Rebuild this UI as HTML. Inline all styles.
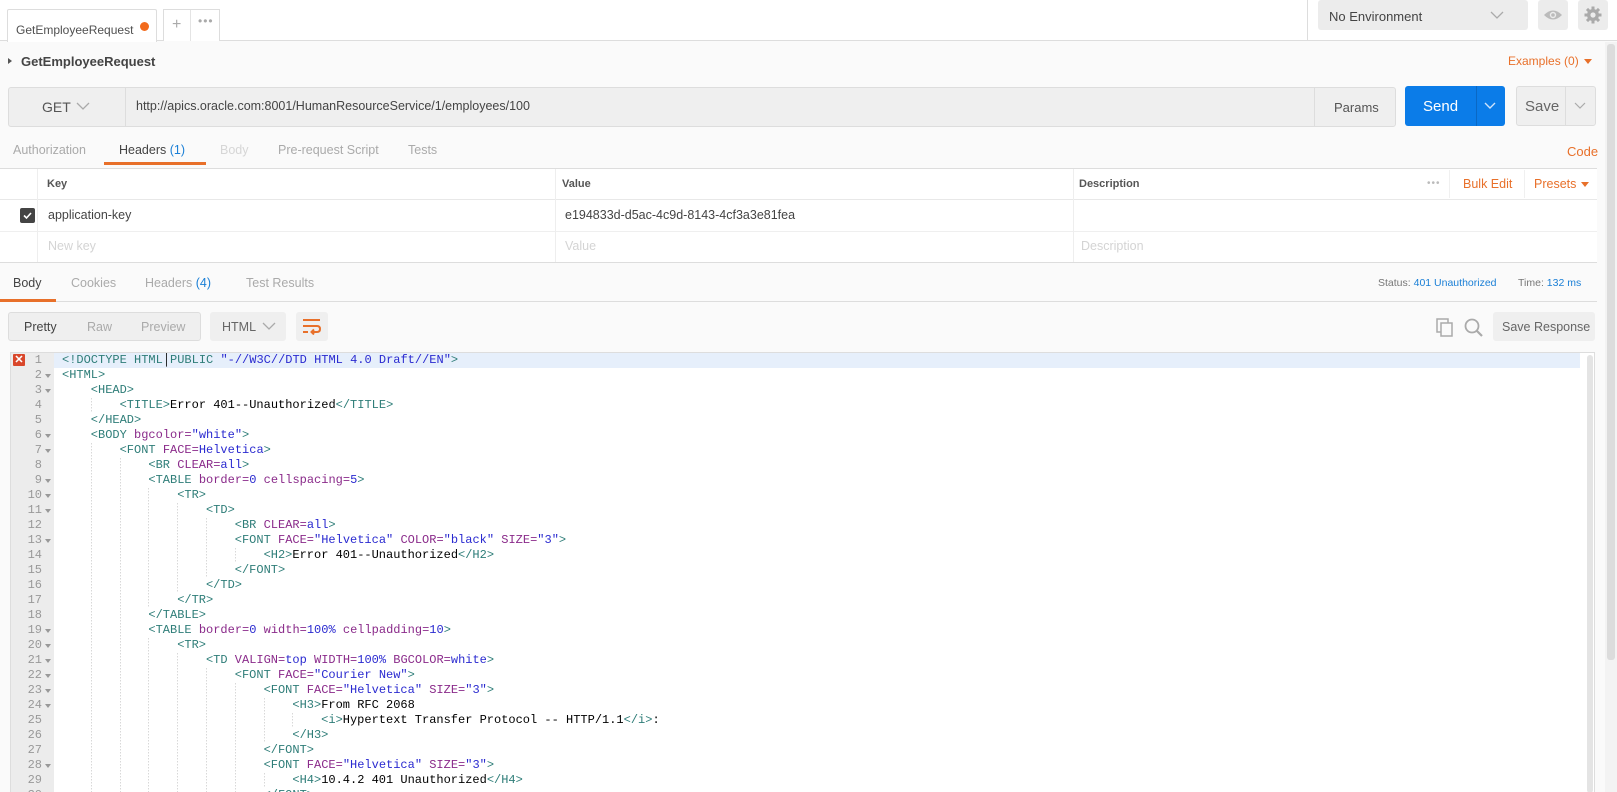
<!DOCTYPE html>
<html><head><meta charset="utf-8"><style>
*{box-sizing:border-box;margin:0;padding:0}
body{width:1617px;height:792px;overflow:hidden;background:#fafafa;font-family:"Liberation Sans",sans-serif;font-size:12px;color:#505050;position:relative}
.a{position:absolute}
.o{color:#e8702a}
.b{color:#1a7fd6}
.code{position:absolute;left:10px;top:352px;width:1585px;height:440px;background:#fff;border:1px solid #ddd;border-bottom:none;overflow:hidden}
.gut{position:absolute;left:0;top:0;width:43px;height:100%;background:#ececec}
.ln{position:absolute;left:0;width:43px;height:15px;font:12px/15px "Liberation Mono",monospace;color:#999;text-align:right;padding-right:12px}
.ln.f::after{content:"";position:absolute;right:3px;top:6px;border:3px solid transparent;border-top:4px solid #999;border-bottom:0}
.cl{position:absolute;left:51px;height:15px;font:12px/15px "Liberation Mono",monospace;white-space:pre;color:#000}
.g{display:inline-block;width:28.8px;height:15px;vertical-align:top}
.g.d{background:linear-gradient(#d8d8d8 50%,transparent 50%) 0 0/1px 3px repeat-y}
.t{color:#2e7d78}.at{color:#8a2a8a}.v{color:#2a2ad0}
</style></head><body>
<!-- top tab bar -->
<div class="a" style="left:0;top:0;width:1617px;height:41px;background:#fff;border-bottom:1px solid #ddd"></div>
<div class="a" style="left:7px;top:9px;width:150px;height:33px;background:#fff;border:1px solid #ddd;border-bottom:none;border-radius:2px 2px 0 0;font-size:12px;color:#505050;padding:14px 0 0 8px;line-height:1">GetEmployeeRequest</div>
<div class="a" style="left:140px;top:22px;width:9px;height:9px;border-radius:50%;background:#f26b1d"></div>
<div class="a" style="left:163px;top:9px;width:57px;height:32px;border:1px solid #ddd;border-bottom:none;background:#fff"></div>
<div class="a" style="left:190px;top:10px;width:1px;height:31px;background:#e4e4e4"></div>
<div class="a" style="left:172px;top:16px;color:#aaa;font-size:16px">+</div>
<div class="a" style="left:198px;top:14px;color:#aaa;font-size:12px;letter-spacing:1px">•••</div>
<div class="a" style="left:1307px;top:0;width:1px;height:41px;background:#ddd"></div>
<div class="a" style="left:1318px;top:0;width:210px;height:30px;background:#ececec;border-radius:3px;padding:9px 11px;font-size:13px;color:#444">No Environment</div>
<svg class="a" style="left:1490px;top:10px" width="14" height="10"><path d="M1 2 L7 8 L13 2" fill="none" stroke="#aaa" stroke-width="1.3"/></svg>
<div class="a" style="left:1538px;top:0;width:30px;height:30px;background:#ececec;border-radius:3px"></div>
<svg class="a" style="left:1543px;top:8px" width="20" height="14"><path d="M1 7 Q10 -2 19 7 Q10 16 1 7Z" fill="#bbb"/><circle cx="10" cy="7" r="3.2" fill="#ececec"/><circle cx="10" cy="7" r="1.8" fill="#bbb"/></svg>
<div class="a" style="left:1578px;top:0;width:30px;height:30px;background:#ececec;border-radius:3px"></div>
<svg class="a" style="left:1584px;top:6px" width="18" height="18" viewBox="0 0 18 18"><g fill="#aaa"><circle cx="9" cy="9" r="6"/><rect x="7.5" y="0.5" width="3" height="17"/><rect x="0.5" y="7.5" width="17" height="3"/><rect x="7.5" y="0.5" width="3" height="17" transform="rotate(45 9 9)"/><rect x="7.5" y="0.5" width="3" height="17" transform="rotate(-45 9 9)"/></g><circle cx="9" cy="9" r="2.6" fill="#ececec"/></svg>
<!-- outer scrollbar -->
<div class="a" style="left:1605px;top:42px;width:12px;height:750px;background:#f3f3f3"></div>
<div class="a" style="left:1607px;top:44px;width:8px;height:616px;background:#dcdcdc;border-radius:3px"></div>
<!-- request name -->
<div class="a" style="left:8px;top:58px;border:3px solid transparent;border-left:4px solid #555"></div>
<div class="a" style="left:21px;top:54px;font-size:13px;font-weight:bold;color:#444">GetEmployeeRequest</div>
<div class="a o" style="left:1508px;top:54px;font-size:12px">Examples (0)</div>
<div class="a" style="left:1584px;top:59px;border:4px solid transparent;border-top:5px solid #e8702a;border-bottom:0"></div>
<!-- url row -->
<div class="a" style="left:8px;top:87px;width:1388px;height:40px;background:#efefef;border:1px solid #ddd;border-radius:3px"></div>
<div class="a" style="left:125px;top:87px;width:1px;height:40px;background:#ddd"></div>
<div class="a" style="left:1314px;top:87px;width:1px;height:40px;background:#ddd"></div>
<div class="a" style="left:42px;top:99px;font-size:14px;color:#555">GET</div>
<svg class="a" style="left:76px;top:101px" width="14" height="10"><path d="M1 2 L7 8 L13 2" fill="none" stroke="#aaa" stroke-width="1.3"/></svg>
<div class="a" style="left:136px;top:99px;font-size:12.5px;color:#444">http://apics.oracle.com:8001/HumanResourceService/1/employees/100</div>
<div class="a" style="left:1334px;top:100px;font-size:13px;color:#555">Params</div>
<div class="a" style="left:1405px;top:86px;width:100px;height:40px;background:#0b7ce8;border-radius:3px"></div>
<div class="a" style="left:1476px;top:86px;width:1px;height:40px;background:#0a68c4"></div>
<div class="a" style="left:1423px;top:98px;font-size:15px;color:#fff">Send</div>
<svg class="a" style="left:1484px;top:102px" width="12" height="8"><path d="M1 1 L6 6 L11 1" fill="none" stroke="#cfe3fb" stroke-width="1.4"/></svg>
<div class="a" style="left:1516px;top:86px;width:80px;height:40px;background:#efefef;border:1px solid #ddd;border-radius:3px"></div>
<div class="a" style="left:1565px;top:87px;width:1px;height:38px;background:#ddd"></div>
<div class="a" style="left:1525px;top:98px;font-size:15px;color:#666">Save</div>
<svg class="a" style="left:1574px;top:102px" width="12" height="8"><path d="M1 1 L6 6 L11 1" fill="none" stroke="#aaa" stroke-width="1.2"/></svg>
<!-- request tabs -->
<div class="a" style="left:13px;top:143px;font-size:12.5px;color:#aaa">Authorization</div>
<div class="a" style="left:119px;top:143px;font-size:12.5px;color:#444">Headers <span class="b">(1)</span></div>
<div class="a" style="left:104px;top:162px;width:102px;height:3px;background:#e8702a"></div>
<div class="a" style="left:220px;top:143px;font-size:12.5px;color:#d6d6d6">Body</div>
<div class="a" style="left:278px;top:143px;font-size:12.5px;color:#aaa">Pre-request Script</div>
<div class="a" style="left:408px;top:143px;font-size:12.5px;color:#aaa">Tests</div>
<div class="a o" style="left:1567px;top:144px;font-size:13px">Code</div>
<!-- headers table -->
<div class="a" style="left:0;top:168px;width:1597px;height:95px;background:#fff;border-top:1px solid #ddd;border-bottom:1px solid #ddd"></div>
<div class="a" style="left:0;top:199px;width:1597px;height:1px;background:#e8e8e8"></div>
<div class="a" style="left:0;top:231px;width:1597px;height:1px;background:#efefef"></div>
<div class="a" style="left:37px;top:169px;width:1px;height:93px;background:#eee"></div>
<div class="a" style="left:555px;top:169px;width:1px;height:93px;background:#eee"></div>
<div class="a" style="left:1073px;top:169px;width:1px;height:93px;background:#eee"></div>
<div class="a" style="left:47px;top:178px;font-size:11px;font-weight:bold;color:#555">Key</div>
<div class="a" style="left:562px;top:178px;font-size:11px;font-weight:bold;color:#555">Value</div>
<div class="a" style="left:1079px;top:178px;font-size:11px;font-weight:bold;color:#555">Description</div>
<div class="a" style="left:1427px;top:178px;font-size:10px;color:#bbb;letter-spacing:1px">•••</div>
<div class="a" style="left:1449px;top:170px;width:1px;height:28px;background:#f0f0f0"></div>
<div class="a o" style="left:1463px;top:177px;font-size:12.5px">Bulk Edit</div>
<div class="a" style="left:1524px;top:170px;width:1px;height:28px;background:#f0f0f0"></div>
<div class="a o" style="left:1534px;top:177px;font-size:12.5px">Presets</div>
<div class="a" style="left:1581px;top:182px;border:4px solid transparent;border-top:5px solid #e8702a;border-bottom:0"></div>
<div class="a" style="left:20px;top:208px;width:15px;height:15px;background:#444;border-radius:2px"></div>
<svg class="a" style="left:20px;top:208px" width="15" height="15"><path d="M4 7.5 L6.5 10 L11 5" fill="none" stroke="#fff" stroke-width="1.6"/></svg>
<div class="a" style="left:48px;top:208px;font-size:12.5px;color:#444">application-key</div>
<div class="a" style="left:565px;top:208px;font-size:12.5px;color:#444">e194833d-d5ac-4c9d-8143-4cf3a3e81fea</div>
<div class="a" style="left:48px;top:239px;font-size:12.5px;color:#d4d4d4">New key</div>
<div class="a" style="left:565px;top:239px;font-size:12.5px;color:#d4d4d4">Value</div>
<div class="a" style="left:1081px;top:239px;font-size:12.5px;color:#d4d4d4">Description</div>
<!-- response tabs -->
<div class="a" style="left:0;top:301px;width:1597px;height:1px;background:#ddd"></div>
<div class="a" style="left:13px;top:276px;font-size:12.5px;color:#444">Body</div>
<div class="a" style="left:0;top:299px;width:56px;height:3px;background:#e8702a"></div>
<div class="a" style="left:71px;top:276px;font-size:12.5px;color:#aaa">Cookies</div>
<div class="a" style="left:145px;top:276px;font-size:12.5px;color:#aaa">Headers <span class="b">(4)</span></div>
<div class="a" style="left:246px;top:276px;font-size:12.5px;color:#aaa">Test Results</div>
<div class="a" style="left:1378px;top:277px;font-size:10.5px;color:#777">Status: <span class="b">401 Unauthorized</span></div>
<div class="a" style="left:1518px;top:277px;font-size:10.5px;color:#777">Time: <span class="b">132 ms</span></div>
<!-- toolbar -->
<div class="a" style="left:8px;top:312px;width:193px;height:29px;background:#efefef;border:1px solid #ddd;border-radius:3px"></div>
<div class="a" style="left:24px;top:320px;font-size:12.5px;color:#444">Pretty</div>
<div class="a" style="left:87px;top:320px;font-size:12.5px;color:#aaa">Raw</div>
<div class="a" style="left:141px;top:320px;font-size:12.5px;color:#aaa">Preview</div>
<div class="a" style="left:210px;top:312px;width:76px;height:29px;background:#efefef;border-radius:3px"></div>
<div class="a" style="left:222px;top:320px;font-size:12.5px;color:#666">HTML</div>
<svg class="a" style="left:262px;top:322px" width="14" height="9"><path d="M1 1 L7 7 L13 1" fill="none" stroke="#aaa" stroke-width="1.3"/></svg>
<div class="a" style="left:296px;top:312px;width:32px;height:29px;background:#efefef;border-radius:3px"></div>
<svg class="a" style="left:302px;top:318px" width="20" height="17"><path d="M1 2 H18 M1 8 H15 Q18 8 18 11 Q18 14 15 14 H10 M12 11.5 L9.5 14 L12 16.5 M1 14 H6" fill="none" stroke="#e8702a" stroke-width="2"/></svg>
<svg class="a" style="left:1436px;top:318px" width="18" height="19"><rect x="1" y="1" width="11" height="13" fill="none" stroke="#aaa" stroke-width="1.5"/><rect x="5" y="5" width="11" height="13" fill="#fafafa" stroke="#aaa" stroke-width="1.5"/></svg>
<svg class="a" style="left:1464px;top:318px" width="20" height="20"><circle cx="8" cy="8" r="6.5" fill="none" stroke="#aaa" stroke-width="1.8"/><path d="M13 13 L18 18" stroke="#aaa" stroke-width="2.2"/></svg>
<div class="a" style="left:1493px;top:312px;width:102px;height:29px;background:#efefef;border-radius:3px;padding:8px 0 0 9px;font-size:12.5px;color:#666">Save Response</div>
<!-- code -->
<div class="code">
<div class="gut"></div>
<div class="a" style="left:43px;top:0;width:1526px;height:15px;background:#e6effb"></div>
<div class="a" style="left:1576px;top:2px;width:6px;height:438px;background:#e4e4e4;border-radius:3px"></div>
<div class="a" style="left:2px;top:1px;width:12px;height:12px;background:#d9472b;border-radius:1px;color:#fff;font:bold 11px/12px 'Liberation Sans',sans-serif;text-align:center">✕</div>
<div id="L"></div>
</div>
<script>
var L=[
[0,'<span class="t">&lt;!DOCTYPE HTML</span>│<span class="t">PUBLIC </span><span class="v">"-//W3C//DTD HTML 4.0 Draft//EN"</span><span class="t">&gt;</span>'],
[0,'<span class="t">&lt;HTML&gt;</span>',1],
[1,'<span class="t">&lt;HEAD&gt;</span>',1],
[2,'<span class="t">&lt;TITLE&gt;</span>Error 401--Unauthorized<span class="t">&lt;/TITLE&gt;</span>'],
[1,'<span class="t">&lt;/HEAD&gt;</span>'],
[1,'<span class="t">&lt;BODY </span><span class="at">bgcolor=</span><span class="v">"white"</span><span class="t">&gt;</span>',1],
[2,'<span class="t">&lt;FONT </span><span class="at">FACE=</span><span class="v">Helvetica</span><span class="t">&gt;</span>',1],
[3,'<span class="t">&lt;BR </span><span class="at">CLEAR=</span><span class="v">all</span><span class="t">&gt;</span>'],
[3,'<span class="t">&lt;TABLE </span><span class="at">border=</span><span class="v">0</span> <span class="at">cellspacing=</span><span class="v">5</span><span class="t">&gt;</span>',1],
[4,'<span class="t">&lt;TR&gt;</span>',1],
[5,'<span class="t">&lt;TD&gt;</span>',1],
[6,'<span class="t">&lt;BR </span><span class="at">CLEAR=</span><span class="v">all</span><span class="t">&gt;</span>'],
[6,'<span class="t">&lt;FONT </span><span class="at">FACE=</span><span class="v">"Helvetica"</span> <span class="at">COLOR=</span><span class="v">"black"</span> <span class="at">SIZE=</span><span class="v">"3"</span><span class="t">&gt;</span>',1],
[7,'<span class="t">&lt;H2&gt;</span>Error 401--Unauthorized<span class="t">&lt;/H2&gt;</span>'],
[6,'<span class="t">&lt;/FONT&gt;</span>'],
[5,'<span class="t">&lt;/TD&gt;</span>'],
[4,'<span class="t">&lt;/TR&gt;</span>'],
[3,'<span class="t">&lt;/TABLE&gt;</span>'],
[3,'<span class="t">&lt;TABLE </span><span class="at">border=</span><span class="v">0</span> <span class="at">width=</span><span class="v">100%</span> <span class="at">cellpadding=</span><span class="v">10</span><span class="t">&gt;</span>',1],
[4,'<span class="t">&lt;TR&gt;</span>',1],
[5,'<span class="t">&lt;TD </span><span class="at">VALIGN=</span><span class="v">top</span> <span class="at">WIDTH=</span><span class="v">100%</span> <span class="at">BGCOLOR=</span><span class="v">white</span><span class="t">&gt;</span>',1],
[6,'<span class="t">&lt;FONT </span><span class="at">FACE=</span><span class="v">"Courier New"</span><span class="t">&gt;</span>',1],
[7,'<span class="t">&lt;FONT </span><span class="at">FACE=</span><span class="v">"Helvetica"</span> <span class="at">SIZE=</span><span class="v">"3"</span><span class="t">&gt;</span>',1],
[8,'<span class="t">&lt;H3&gt;</span>From RFC 2068',1],
[9,'<span class="t">&lt;i&gt;</span>Hypertext Transfer Protocol -- HTTP/1.1<span class="t">&lt;/i&gt;</span>:'],
[8,'<span class="t">&lt;/H3&gt;</span>'],
[7,'<span class="t">&lt;/FONT&gt;</span>'],
[7,'<span class="t">&lt;FONT </span><span class="at">FACE=</span><span class="v">"Helvetica"</span> <span class="at">SIZE=</span><span class="v">"3"</span><span class="t">&gt;</span>',1],
[8,'<span class="t">&lt;H4&gt;</span>10.4.2 401 Unauthorized<span class="t">&lt;/H4&gt;</span>'],
[7,'<span class="t">&lt;/FONT&gt;</span>']
];
var h='';
for(var i=0;i<L.length;i++){
 var y=i*15;
 h+='<div class="ln'+(L[i][2]?' f':'')+'" style="top:'+y+'px">'+(i+1)+'</div>';
 var ind='';
 for(var k=0;k<L[i][0];k++)ind+='<span class="g'+(k>0?' d':'')+'"></span>';
 h+='<div class="cl" style="top:'+y+'px">'+ind+L[i][1]+'</div>';
}
document.getElementById('L').innerHTML=h;
</script>
</body></html>
